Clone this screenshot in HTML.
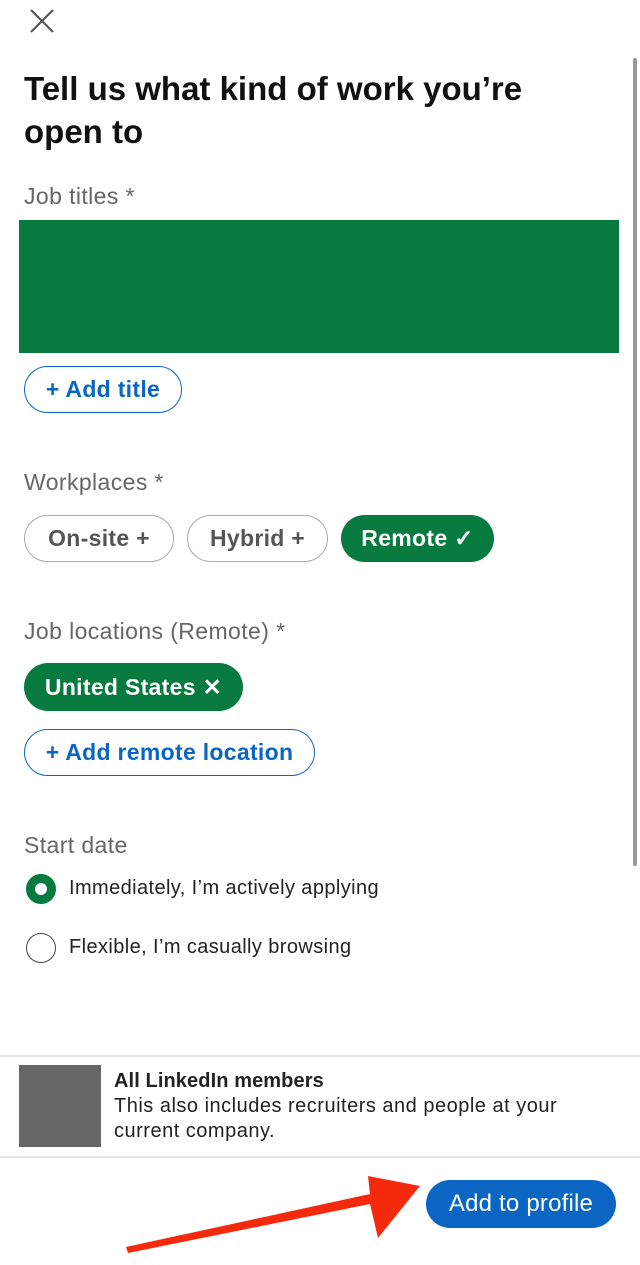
<!DOCTYPE html>
<html><head><meta charset="utf-8"><style>
body{margin:0;width:640px;height:1265px;background:#fff;position:relative;overflow:hidden;font-family:"Liberation Sans",Arial,sans-serif}
.a{position:absolute;white-space:nowrap}
.lbl{font-size:23px;color:#666;line-height:26px;letter-spacing:0.4px}
.chip{position:absolute;box-sizing:border-box;border-radius:24px;font-size:23px;font-weight:bold;letter-spacing:0.3px;display:flex;align-items:center;justify-content:center;white-space:nowrap}
.o{border:1.5px solid #aaa;color:#555}
.g{background:#067a3f;color:#fff}
.b{border:1.5px solid #0a66c2;color:#0a66c2}
.txt{font-size:20px;color:#222;line-height:25px;letter-spacing:0.4px}
</style></head><body>
<svg class="a" style="left:29px;top:8px" width="26" height="26"><path d="M2 2L24 24M24 2L2 24" stroke="#555" stroke-width="2.2"/></svg>
<div class="a" style="left:633px;top:58px;width:4px;height:808px;background:#999;border-radius:2px"></div>
<div class="a" style="left:24px;top:67px;font-size:33px;font-weight:bold;line-height:43px;color:#111">Tell us what kind of work you’re<br>open to</div>
<div class="a lbl" style="left:24px;top:183px">Job titles *</div>
<div class="a" style="left:19px;top:220px;width:600px;height:133px;background:#067a3f"></div>
<div class="chip b" style="left:24px;top:366px;width:158px;height:47px">+ Add title</div>
<div class="a lbl" style="left:24px;top:469px">Workplaces *</div>
<div class="chip o" style="left:24px;top:515px;width:150px;height:47px">On-site +</div>
<div class="chip o" style="left:187px;top:515px;width:141px;height:47px">Hybrid +</div>
<div class="chip g" style="left:341px;top:515px;width:153px;height:47px">Remote ✓</div>
<div class="a lbl" style="left:24px;top:618px">Job locations (Remote) *</div>
<div class="chip g" style="left:24px;top:663px;width:219px;height:48px">United States ✕</div>
<div class="chip b" style="left:24px;top:729px;width:291px;height:47px">+ Add remote location</div>
<div class="a lbl" style="left:24px;top:832px">Start date</div>
<div class="a" style="left:26px;top:874px;width:30px;height:30px;border-radius:50%;box-sizing:border-box;border:9px solid #067a3f"></div>
<div class="a txt" style="left:69px;top:876px">Immediately, I’m actively applying</div>
<div class="a" style="left:26px;top:933px;width:30px;height:30px;border-radius:50%;box-sizing:border-box;border:1.5px solid #444"></div>
<div class="a txt" style="left:69px;top:935px">Flexible, I’m casually browsing</div>
<div class="a" style="left:0;top:1055px;width:640px;height:1.5px;background:#e4e4e4"></div>
<div class="a" style="left:19px;top:1065px;width:82px;height:82px;background:#666"></div>
<div class="a" style="left:114px;top:1069px;font-size:20px;line-height:25px;color:#222;letter-spacing:0.5px"><b style="letter-spacing:0.1px">All LinkedIn members</b><br>This also includes recruiters and people at your<br>current company.</div>
<div class="a" style="left:0;top:1156px;width:640px;height:1.5px;background:#e4e4e4"></div>
<div class="chip" style="left:426px;top:1180px;width:190px;height:48px;background:#0a66c2;color:#fff;font-weight:normal;font-size:24px;letter-spacing:0.2px">Add to profile</div>
<svg class="a" style="left:0;top:1160px" width="640" height="105"><path d="M128 93L370 44L378 78L420 26L368 16L370 34L126 87Z" fill="#f52a0c"/></svg>
</body></html>
